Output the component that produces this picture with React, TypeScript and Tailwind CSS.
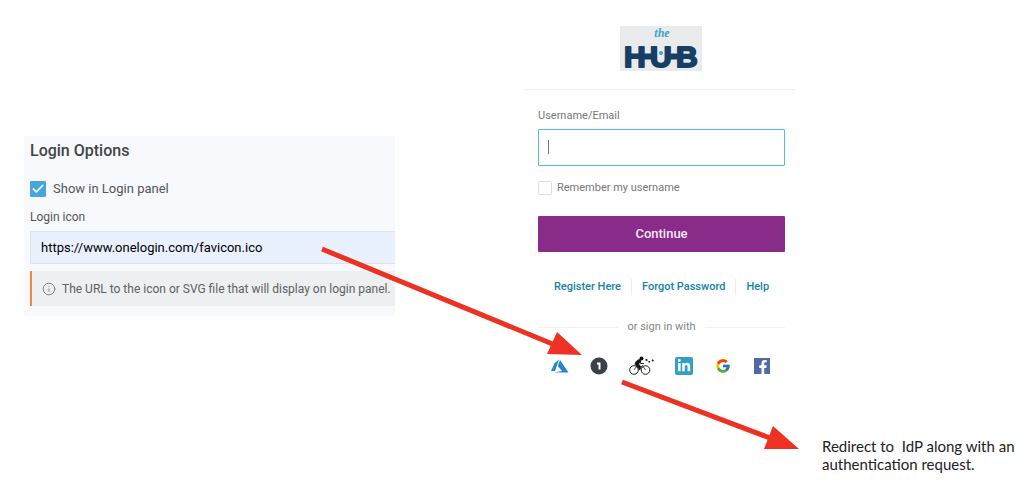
import { useState } from "react";
import { FaFacebookF, FaLinkedinIn } from "react-icons/fa";
import { FcGoogle } from "react-icons/fc";
import { Check, Info } from "lucide-react";

function HubLogo() {
  return (
    <svg role="img" aria-label="the HUB" viewBox="0 0 82 45" className="h-[45px] w-[82px] overflow-visible bg-[#eaebec]">
      <text x="42" y="11" textAnchor="middle" fontFamily="Liberation Serif, serif" fontStyle="italic" fontWeight="700" fontSize="12" fill="#3ba4ce">
        the
      </text>
      <g fontFamily="Liberation Sans, sans-serif" fontWeight="700" fontSize="30" fill="#173f66" stroke="#173f66" strokeWidth="2" strokeLinejoin="round">
        <text x="4" y="41">H</text>
        <text x="30" y="41">U</text>
        <text x="56" y="41">B</text>
      </g>
      <path d="M22 30.500H34M48 30.500H60" stroke="#173f66" strokeWidth="6" />
      <circle cx="41" cy="27" r="2" fill="#3ba4ce" />
    </svg>
  );
}

function AzureIcon() {
  return (
    <svg viewBox="0 0 18 14" className="h-[14px] w-[18px]" fill="#2387cc" aria-hidden="true">
      <path d="M8 0.500L3.500 4.300L0 12H4Z" />
      <path d="M9 1L6.800 7L11 12L3.500 13.500H17.500Z" />
    </svg>
  );
}

function CyclistIcon() {
  return (
    <svg viewBox="0 0 26 20" className="h-5 w-[26px]" fill="none" stroke="#222" aria-hidden="true">
      <circle cx="5" cy="14" r="4.300" strokeWidth="1" />
      <circle cx="16.500" cy="14" r="4.300" strokeWidth="1" />
      <path d="M5 14L7.500 10.500L10.500 14L13.500 9.500L16.500 14M7.500 10.500H13" strokeWidth="0.800" />
      <path d="M6 8C7 5 8.500 4 10.500 3.500L12 5L9.500 8L11.500 10.500L10.500 14L9 10.500L6.500 9Z" fill="#111" strokeWidth="1" strokeLinejoin="round" />
      <path d="M10.500 5.500L12 7.500H15" strokeWidth="1.200" />
      <circle cx="12.500" cy="2.500" r="2" fill="#111" stroke="none" />
      <path d="M16.500 3.500L18.500 4.500M19.500 5.500L21 6M23 4L24.500 5" strokeWidth="1.600" />
    </svg>
  );
}

function OneLoginIcon() {
  return (
    <svg viewBox="0 0 18 18" className="size-[18px]" aria-hidden="true">
      <circle cx="9" cy="9" r="8.500" fill="#3a3f49" />
      <path d="M7 5.500H10.500V12.500H8.500V7.500H7Z" fill="#fff" />
    </svg>
  );
}

function LoginOptions() {
  const [visible, setVisible] = useState(true);

  return (
    <section className="col-start-1 mt-[136px] self-start bg-[#f7f9fc] pb-[10px] pl-[6px] text-[#54565a]">
      <h2 className="pt-[5px] text-base/5 font-medium text-[#424549]">Login Options</h2>
      <label className="mt-5 flex items-center gap-[7px] text-[13px]/4">
        <span className="relative size-4">
          <input
            type="checkbox"
            checked={visible}
            onChange={(e) => setVisible(e.target.checked)}
            className="block size-4 appearance-none rounded-[1px] border border-[#46a5dc] checked:bg-[#46a5dc]"
          />
          {visible && <Check className="pointer-events-none absolute inset-0 size-4 p-px text-white" strokeWidth={3} />}
        </span>
        Show in Login panel
      </label>
      <label htmlFor="icon-url" className="mt-3 block text-xs/4">
        Login icon
      </label>
      <input
        id="icon-url"
        type="text"
        defaultValue="https://www.onelogin.com/favicon.ico"
        className="mt-[6px] block h-[33px] w-full rounded-l-[1px] border border-r-0 border-[#e0e3e8] bg-[#e9f0fe] px-[10px] text-[13px] text-black outline-none"
      />
      <p className="mt-[7px] flex h-[35px] items-center gap-[6px] border-l-2 border-[#f0883e] bg-[#eeeff0] pl-[10px] text-xs whitespace-nowrap text-[#606164]">
        <Info className="size-[14px] shrink-0 text-[#77797c]" strokeWidth={1.5} />
        The URL to the icon or SVG file that will display on login panel.
      </p>
    </section>
  );
}

function LoginPanel() {
  const [username, setUsername] = useState("");

  return (
    <section className="col-start-3 pt-[26px] text-[#75777a]">
      <header className="flex justify-center border-b border-[#f1f1f1] pb-[18px] pl-[2px]">
        <HubLogo />
      </header>
      <form className="mr-[10px] ml-[14px]" onSubmit={(e) => e.preventDefault()}>
        <label htmlFor="username" className="mt-[18px] block text-[11px]/4">
          Username/Email
        </label>
        <div className="relative mt-[5px]">
          <input
            id="username"
            type="text"
            value={username}
            onChange={(e) => setUsername(e.target.value)}
            className="block h-[37px] w-full rounded-[1px] border border-[#50bfdf] bg-white px-[10px] text-[13px] outline-none"
          />
          {!username && <span className="pointer-events-none absolute top-[11px] left-[10px] h-[14px] w-px bg-[#777777]" />}
        </div>
        <label className="mt-[14px] flex items-center gap-[5px] text-[11px]/4">
          <input type="checkbox" className="size-[14px] appearance-none rounded-[2px] border border-[#dddddd] checked:bg-[#46a5dc]" />
          Remember my username
        </label>
        <button type="submit" className="mt-5 h-9 w-full rounded-[1px] bg-[#892c89] text-[13px] font-medium text-[#f3e6f3]">
          Continue
        </button>
        <nav className="mt-[27px] flex justify-center text-[11px]/4 font-medium text-[#1683a7]">
          <a href="#register" className="pr-[10px]">Register Here</a>
          <a href="#forgot" className="border-l border-[#eeeeee] px-[10px]">Forgot Password</a>
          <a href="#help" className="border-l border-[#eeeeee] pl-[10px]">Help</a>
        </nav>
        <div className="mt-6 flex items-center gap-[9px] text-[11px]/4 text-[#858688]">
          <span className="h-px flex-1 bg-[#f1f1f1]" />
          or sign in with
          <span className="h-px flex-1 bg-[#f1f1f1]" />
        </div>
        <div className="mt-[21px] flex h-5 items-center justify-between pr-[14px] pl-[13px]">
          <button type="button" aria-label="Azure">
            <AzureIcon />
          </button>
          <button type="button" aria-label="OneLogin">
            <OneLoginIcon />
          </button>
          <button type="button" aria-label="Cycling">
            <CyclistIcon />
          </button>
          <button type="button" aria-label="LinkedIn" className="grid size-[18px] place-items-center rounded-[2px] bg-[#32a0c6] text-white">
            <FaLinkedinIn className="size-[14px]" />
          </button>
          <button type="button" aria-label="Google" className="grid size-[18px] place-items-center">
            <FcGoogle className="size-4" />
          </button>
          <button type="button" aria-label="Facebook" className="grid size-[18px] place-items-center">
            <span className="grid size-4 place-items-end bg-[#5269a5] text-white">
              <FaFacebookF className="size-[14px]" />
            </span>
          </button>
        </div>
      </form>
    </section>
  );
}

function Arrows() {
  return (
    <svg viewBox="0 0 1036 490" className="pointer-events-none absolute inset-x-0 top-0 w-full" fill="#ed3224" stroke="#ed3224" aria-hidden="true">
      <path d="M322 249L555 345" strokeWidth="5" />
      <path d="M557 332L582 355L547 354Z" stroke="none" />
      <path d="M622 382L770 438" strokeWidth="5" />
      <path d="M773 426L799 449L764 449Z" stroke="none" />
    </svg>
  );
}

export default function App() {
  return (
    <main className="relative grid grid-cols-[371fr_129fr_271fr_27fr_214fr] bg-white pb-4 pl-6 font-[Roboto,sans-serif]">
      <LoginOptions />
      <LoginPanel />
      <p className="col-start-5 mt-[437px] font-[Lato,sans-serif] text-[15px]/[18px] whitespace-pre text-[#222222]">
        {"Redirect to  IdP along with an\nauthentication request."}
      </p>
      <Arrows />
    </main>
  );
}
